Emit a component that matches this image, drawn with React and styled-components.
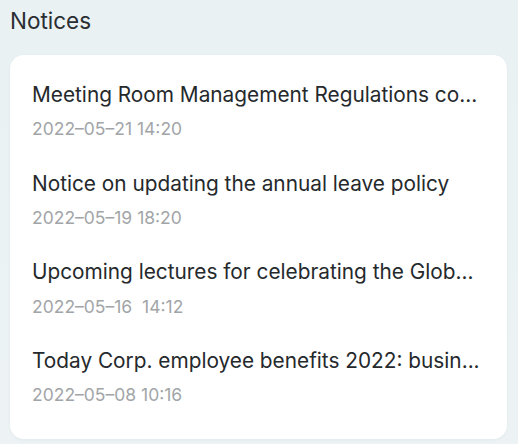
import React from "react";
import styled, { createGlobalStyle } from "styled-components";

const Global = createGlobalStyle`
  html, body { margin: 0; padding: 0; }
  body {
    width: 518px;
    height: 444px;
    overflow: hidden;
    background: linear-gradient(180deg, #e9f1f3 0%, #edf3f5 100%);
    font-family: Inter, "Noto Sans", "Liberation Sans", sans-serif;
  }
`;

const Page = styled.div`
  box-sizing: border-box;
  width: 518px;
  height: 444px;
  padding: 6px 11px 0 10px;
  display: flex;
  flex-direction: column;
`;

const Heading = styled.h2`
  margin: 0;
  font-size: 22.5px;
  font-weight: 400;
  line-height: 30px;
  color: #2a2e32;
`;

const Card = styled.div`
  margin-top: 19px;
  background: #ffffff;
  border-radius: 14px;
  padding: 26px 20px 33px 22px;
  display: flex;
  flex-direction: column;
  gap: 29.3px;
  box-shadow: 0 1px 3px rgba(160, 180, 190, 0.15);
`;

const Item = styled.div`
  display: flex;
  flex-direction: column;
  gap: 9.4px;
`;

const Title = styled.div`
  font-size: 20.8px;
  line-height: 28px;
  color: #25292c;
  white-space: nowrap;
`;

const Date = styled.div`
  font-size: 17.5px;
  line-height: 22px;
  color: #a2a5a8;
  white-space: pre;
`;

const notices = [
  { title: "Meeting Room Management Regulations co...", date: "2022–05–21 14:20" },
  { title: "Notice on updating the annual leave policy", date: "2022–05–19 18:20" },
  { title: "Upcoming lectures for celebrating the Glob...", date: "2022–05–16  14:12" },
  { title: "Today Corp. employee benefits 2022: busin...", date: "2022–05–08 10:16" },
];

export default function App() {
  return (
    <>
      <Global />
      <Page>
        <Heading>Notices</Heading>
        <Card>
          {notices.map((n) => (
            <Item key={n.date}>
              <Title>{n.title}</Title>
              <Date>{n.date}</Date>
            </Item>
          ))}
        </Card>
      </Page>
    </>
  );
}
